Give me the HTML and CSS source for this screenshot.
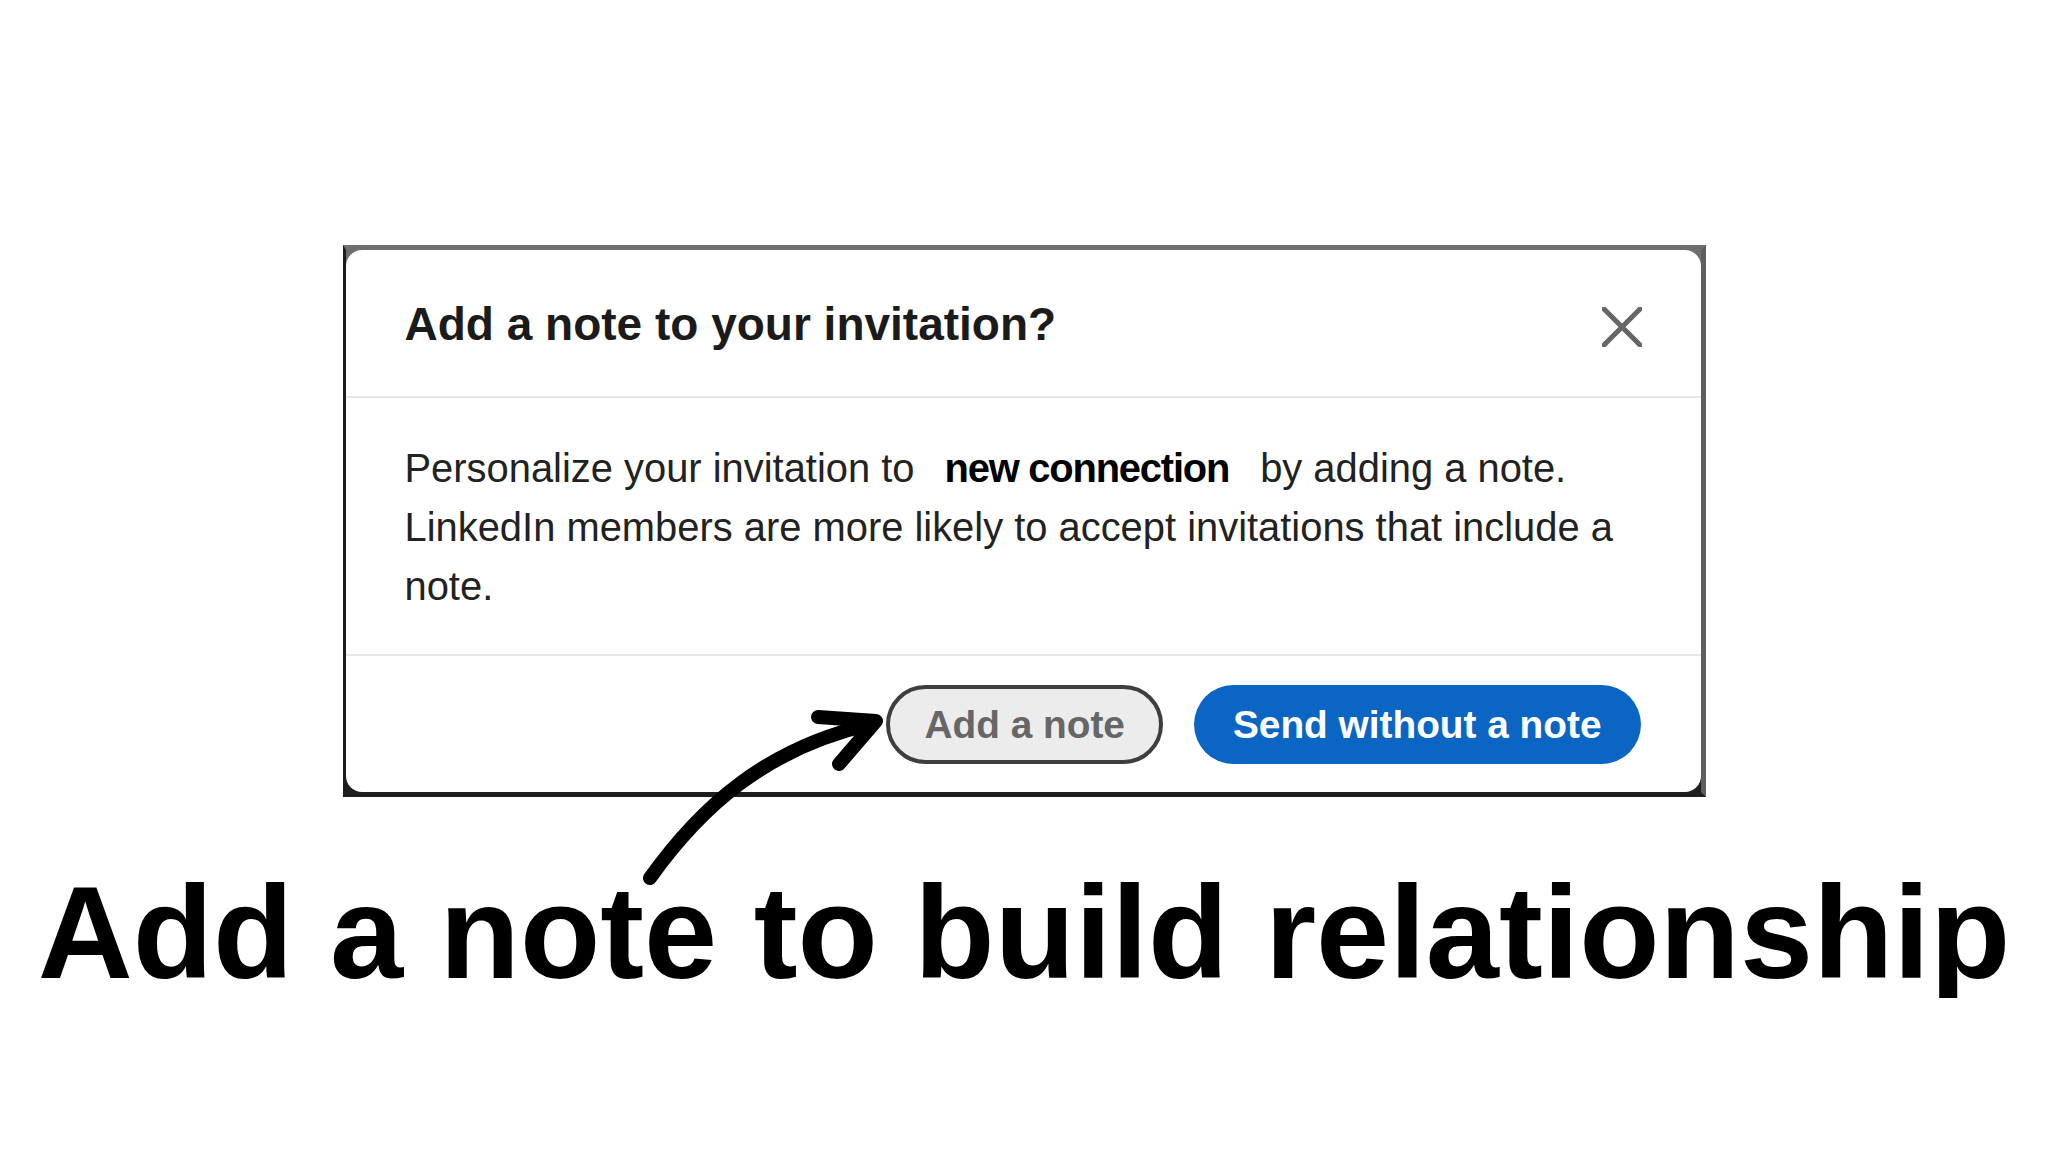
FILE: index.html
```html
<!DOCTYPE html>
<html>
<head>
    <title>Add a note to build relationship</title>
    <link rel="stylesheet" href="styles.css">
</head>
<body>
    <div class="page">
        <div class="frame">
            <div class="dialog">
                <div class="dialog-header">
                    <h2 class="dialog-title">Add a note to your invitation?</h2>
                    <svg class="close-icon" width="40" height="40" viewBox="0 0 40 40">
                        <path d="M2 2 L38 38 M38 2 L2 38" stroke="#666" stroke-width="5" stroke-linecap="round" fill="none"/>
                    </svg>
                </div>
                <div class="dialog-body">
                    <p>Personalize your invitation to<strong>new connection</strong>by adding a note. LinkedIn members are more likely to accept invitations that include a note.</p>
                </div>
                <div class="dialog-footer">
                    <button class="btn btn-secondary">Add a note</button>
                    <button class="btn btn-primary">Send without a note</button>
                </div>
            </div>
        </div>

        <h1 class="headline">Add a note to build relationship</h1>
    </div>

    <!-- hand drawn arrow pointing at the button -->
    <svg class="arrow" width="2048" height="1152" viewBox="0 0 2048 1152">
        <path d="M650 878 C 700 808 765 748 872 724" stroke="#000" stroke-width="14" stroke-linecap="round" fill="none"/>
        <path d="M818 717 L 876 721 L 839 764" stroke="#000" stroke-width="14" stroke-linecap="round" stroke-linejoin="round" fill="none"/>
    </svg>
</body>
</html>
```

FILE: styles.css
```css
body {
    margin: 0;
    background: #fff;
    font-family: "Liberation Sans", Arial, sans-serif;
}

.page {
    display: flex;
    flex-direction: column;
    align-items: center;
    padding-top: 245px;
}

.frame {
    width: 1355px;
    border-top: 5px solid #6e6e6e;
    border-left: 3px solid #1c1c1c;
    border-right: 5px solid #5e5e5e;
    border-bottom: 5px solid #1e1e1e;
    background: linear-gradient(#6e6e6e 50%, #1e1e1e 50%);
}

.dialog {
    background: #fff;
    border-radius: 16px;
    overflow: hidden;
}

.dialog-header {
    height: 146px;
    display: flex;
    align-items: center;
    justify-content: space-between;
    padding: 0 59px 0 59px;
    border-bottom: 2px solid #e6e6e6;
}

.dialog-title {
    margin: 0;
    margin-top: 2px;
    font-size: 46px;
    font-weight: bold;
    color: #1b1b1b;
}

.close-icon {
    margin-top: 8px;
}

.dialog-body {
    padding: 41px 60px 38px 59px;
    border-bottom: 2px solid #e6e6e6;
}

.dialog-body p {
    margin: 0;
    font-size: 39.9px;
    line-height: 59px;
    color: #222;
}

.dialog-body strong {
    color: #000;
    letter-spacing: -1.2px;
    padding: 0 31px 0 30px;
}

.dialog-footer {
    height: 136px;
    display: flex;
    align-items: center;
    justify-content: flex-end;
    gap: 31px;
    padding-right: 60px;
}

.btn {
    font-family: "Liberation Sans", Arial, sans-serif;
    font-size: 38.8px;
    font-weight: bold;
    line-height: 39px;
    border-radius: 40px;
    cursor: pointer;
}

.btn-secondary {
    padding: 16px 34px;
    background: #ececec;
    color: #666;
    border: 4px solid #3e3e3e;
}

.btn-primary {
    padding: 20px 39px;
    background: #0a66c2;
    color: #fff;
    border: none;
}

.headline {
    margin: 70px 0 0;
    font-size: 131.5px;
    line-height: 131px;
    font-weight: bold;
    color: #000;
    white-space: nowrap;
}

.arrow {
    position: absolute;
    left: 0;
    top: 0;
    pointer-events: none;
}
```
